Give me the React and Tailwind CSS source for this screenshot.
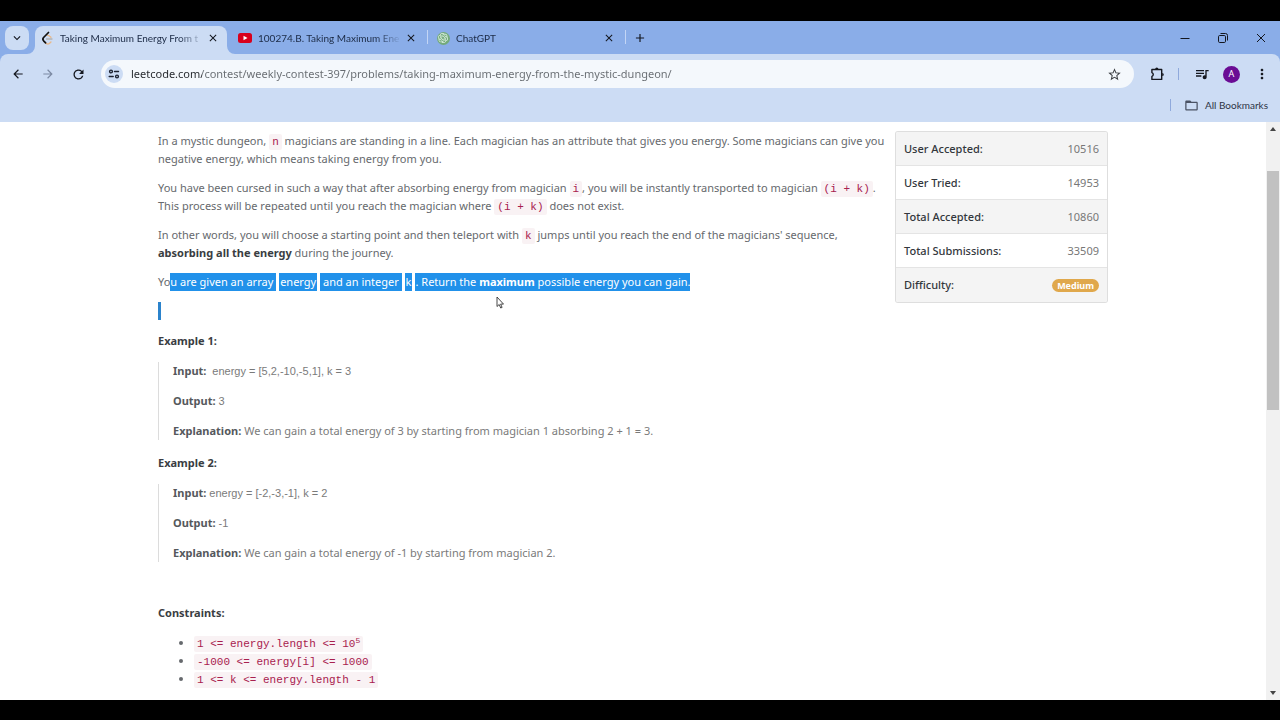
import { MdArrowBack, MdArrowForward, MdRefresh, MdStarBorder, MdQueueMusic, MdMoreVert, MdFolderOpen, MdClose, MdAdd, MdKeyboardArrowDown } from "react-icons/md";
import { SiOpenai } from "react-icons/si";

function LeetCodeIcon() {
  return (
    <svg viewBox="0 0 14 14" className="h-[14px] w-[14px]" fill="none" strokeLinecap="round">
      <path d="M6.500 8h5.500" stroke="#b3b3b3" strokeWidth="1.300" />
      <path d="M6 12.200c1 .9 2.600.9 3.600 0l1.300-1.200M7.500 4.400c.8-.1 1.600.2 2.200.8l1.200 1.100" stroke="#e9b98a" strokeWidth="1.400" />
      <path d="M8.500 1.500 3.600 6.500c-.9 1-.9 2.300 0 3.300l2 2.100" stroke="#111" strokeWidth="1.700" />
    </svg>
  );
}

function YouTubeIcon() {
  return (
    <svg viewBox="0 0 14 10" className="h-[10px] w-[14px]">
      <rect width="14" height="10" rx="2.500" fill="#d8001d" />
      <path d="M5.500 2.800v4.400L9.500 5z" fill="#fff" />
    </svg>
  );
}

function ChatIcon() {
  return (
    <span className="flex h-[13px] w-[13px] items-center justify-center rounded-full bg-[#74aa7c] text-[#e4f5e8]">
      <SiOpenai size={10} />
    </span>
  );
}

function TuneIcon() {
  return (
    <svg viewBox="0 0 12 12" className="h-3 w-3" fill="none" stroke="#1c2230" strokeWidth="1.400" strokeLinecap="round">
      <circle cx="3" cy="3.500" r="1.400" />
      <path d="M6.500 3.500h4M1.200 8.500h4" />
      <circle cx="9" cy="8.500" r="1.400" />
    </svg>
  );
}

function PuzzleIcon() {
  return (
    <svg viewBox="0 0 16 16" className="h-4 w-4" fill="#14171f">
      <path d="M2.900 3.500h9.800v9.900H2.900v-3a2 2 0 0 0 0-3.800z" fill="none" stroke="#14171f" strokeWidth="1.400" strokeLinejoin="round" />
      <path d="M6.200 3a1.600 1.600 0 0 1 3.200 0zM13.200 6.900a1.600 1.600 0 0 1 0 3.200z" />
    </svg>
  );
}

function Foot({ className }) {
  return (
    <svg viewBox="0 0 8 8" className={className} fill="#ccdcf4">
      <path d="M8 0v8H0a8 8 0 0 0 8-8z" />
    </svg>
  );
}

function Tab({ icon, title, active }) {
  return (
    <div className="relative flex w-[198px] shrink-0 items-end">
      <div
        className={
          active
            ? "relative mx-[3px] flex h-7 min-w-0 flex-1 items-center rounded-t-lg bg-[#ccdcf4] pr-2 pb-1 pl-1"
            : "relative mx-[3px] flex h-7 min-w-0 flex-1 items-center pr-2 pb-1 pl-1"
        }
      >
        {active && <Foot className="absolute bottom-0 -left-2 h-2 w-2" />}
        {active && <Foot className="absolute -right-2 bottom-0 h-2 w-2 -scale-x-100" />}
        <span className="flex w-4 shrink-0 justify-center">{icon}</span>
        <a
          href="#tab"
          className="ml-[5px] min-w-0 flex-1 overflow-hidden font-[Lato,sans-serif] text-[10px] whitespace-nowrap text-[#1b2a45] [mask-image:linear-gradient(to_right,#000_118px,transparent_144px)]"
        >
          {title}
        </a>
        <button aria-label="Close tab" className="ml-1 flex h-3 w-3 shrink-0 items-center justify-center text-[#14171f]">
          <MdClose size={12} />
        </button>
      </div>
      {!active && <span className="absolute right-0 bottom-[10px] h-[14px] w-px bg-[#c3d5f5]" />}
    </div>
  );
}

function Code({ children }) {
  return (
    <code className="rounded-xs bg-[#f9f2f4] px-[3px] py-[2px] font-['Liberation_Mono',monospace] text-[11px] leading-none text-[#a8204e]">
      {children}
    </code>
  );
}

function Sel({ children, code }) {
  return (
    <span
      className={
        code
          ? "mx-[3px] inline-block h-[18px] bg-[#2191ea] px-px align-top text-white"
          : "inline-block h-[18px] bg-[#2191ea] align-top whitespace-pre text-white"
      }
    >
      {children}
    </span>
  );
}

function Example({ title, input, output, explanation }) {
  return (
    <section className="mb-[14px]">
      <h2 className="mb-3 font-bold text-[#3a3d42]">{title}</h2>
      <blockquote className="space-y-3 border-l border-[#dcdcdc] pl-[14px] text-[#7a7a7a]">
        <p className="h-[18px]">
          <strong className="text-[#55585c]">Input:</strong> <span className="font-['Liberation_Sans',sans-serif]">{input}</span>
        </p>
        <p className="h-[18px]">
          <strong className="text-[#55585c]">Output:</strong> <span className="font-['Liberation_Sans',sans-serif]">{output}</span>
        </p>
        <p>
          <strong className="text-[#55585c]">Explanation:</strong> {explanation}
        </p>
      </blockquote>
    </section>
  );
}

const stats = [
  ["User Accepted:", "10516"],
  ["User Tried:", "14953"],
  ["Total Accepted:", "10860"],
  ["Total Submissions:", "33509"],
];

export default function App() {
  return (
    <div className="flex h-screen flex-col overflow-hidden bg-black pt-[21px] pb-5 font-['Noto_Sans','Open_Sans',sans-serif] text-[11px] leading-[18px]">
      <header className="shrink-0 bg-[#8aade8]">
        <div className="flex h-[33px]">
          <button aria-label="Search tabs" className="mt-[5px] ml-[5px] flex h-6 w-6 shrink-0 items-center justify-center rounded-lg bg-[#ccdcf4] text-[#14171f]">
            <MdKeyboardArrowDown size={14} />
          </button>
          <nav className="ml-[3px] flex">
            <Tab active icon={<LeetCodeIcon />} title="Taking Maximum Energy From t" />
            <Tab icon={<YouTubeIcon />} title="100274.B. Taking Maximum Ene" />
            <Tab icon={<ChatIcon />} title="ChatGPT" />
          </nav>
          <button aria-label="New tab" className="ml-[6px] flex w-4 items-center justify-center text-[#14171f]">
            <MdAdd size={14} />
          </button>
          <div className="mr-[13px] ml-auto flex items-center gap-[26px] text-[#14171f]">
            <button aria-label="Minimize" className="flex h-3 w-3 items-center">
              <svg viewBox="0 0 12 12" className="h-3 w-3" stroke="currentColor"><path d="M1.500 6.500h9" /></svg>
            </button>
            <button aria-label="Restore">
              <svg viewBox="0 0 12 12" className="h-3 w-3" fill="none" stroke="currentColor">
                <rect x="1.500" y="3.500" width="7" height="7" rx="1.200" />
                <path d="M3.500 1.500H8.500a2 2 0 0 1 2 2V8.500" />
              </svg>
            </button>
            <button aria-label="Close">
              <svg viewBox="0 0 12 12" className="h-3 w-3" stroke="currentColor"><path d="m2 2 8 8M10 2l-8 8" /></svg>
            </button>
          </div>
        </div>
        <div className="rounded-t-lg bg-[#ccdcf4]">
          <div className="flex items-center pt-[6px] pr-[10px] pl-[11px] text-[#14171f]">
            <div className="flex gap-4">
              <button aria-label="Back"><MdArrowBack size={14} /></button>
              <button aria-label="Forward" className="text-[#7c8aa3]"><MdArrowForward size={14} /></button>
              <button aria-label="Reload"><MdRefresh size={15} /></button>
            </div>
            <div className="ml-[15px] flex h-7 min-w-0 flex-1 items-center rounded-full bg-[#f4f8fc] pr-3 pl-1">
              <button aria-label="Site information" className="flex h-[18px] w-[18px] shrink-0 items-center justify-center rounded-full bg-[#ccdcf4]">
                <TuneIcon />
              </button>
              <input
                aria-label="Address"
                defaultValue="leetcode.com/contest/weekly-contest-397/problems/taking-maximum-energy-from-the-mystic-dungeon/"
                className="ml-2 min-w-0 flex-1 bg-[linear-gradient(to_right,#23262b_71px,#666b70_71px)] bg-clip-text text-transparent outline-none"
              />
              <button aria-label="Bookmark this tab" className="text-[#3a3d42]"><MdStarBorder size={15} /></button>
            </div>
            <button aria-label="Extensions" className="ml-[15px]"><PuzzleIcon /></button>
            <span className="ml-[13px] h-3 w-px bg-[#8fa9dc]" />
            <button aria-label="Media" className="ml-[15px]"><MdQueueMusic size={16} /></button>
            <button aria-label="Profile" className="ml-[13px] flex h-[17px] w-[17px] items-center justify-center rounded-full bg-[#6a0c94] text-[9px] text-white">A</button>
            <button aria-label="Menu" className="ml-[14px]"><MdMoreVert size={16} /></button>
          </div>
          <div className="flex h-[34px] items-center justify-end pr-3 font-[Lato,sans-serif] text-[10px] text-[#2c3445]">
            <span className="mr-[13px] h-3 w-px bg-[#8fa9dc]" />
            <button className="flex items-center gap-[6px]">
              <MdFolderOpen size={15} className="text-[#4a5263]" />
              All Bookmarks
            </button>
          </div>
        </div>
      </header>

      <div className="flex min-h-0 flex-1 bg-white">
        <div className="min-w-0 flex-1 overflow-hidden">
          <div className="mx-auto flex w-full max-w-[950px] items-start gap-[7px] pt-[9px]">
            <main className="min-w-0 flex-1 text-[#66696d]">
              <div className="mb-3 space-y-[11px] pt-px">
                <p>
                  In a mystic dungeon, <Code>n</Code> magicians are standing in a line. Each magician has an attribute that gives you energy. Some magicians can give you negative energy, which means taking energy from you.
                </p>
                <p>
                  You have been cursed in such a way that after absorbing energy from magician <Code>i</Code>, you will be instantly transported to magician <Code>(i + k)</Code>. This process will be repeated until you reach the magician where <Code>(i + k)</Code> does not exist.
                </p>
                <p>
                  In other words, you will choose a starting point and then teleport with <Code>k</Code> jumps until you reach the end of the magicians' sequence, <strong className="text-[#3a3d42]">absorbing all the energy</strong> during the journey.
                </p>
                <p className="relative">
                  Yo<Sel>u are given an array </Sel><Sel code>energy</Sel><Sel> and an integer </Sel><Sel code>k</Sel><Sel>. Return the <strong>maximum</strong> possible energy you can gain.</Sel>
                  <svg viewBox="0 0 8 13" className="absolute top-[23px] left-[338px] h-[13px] w-2" fill="#fff" stroke="#333" strokeWidth=".9">
                    <path d="M1 1v9.500l2.200-2 1.500 3.500 1.400-.6-1.500-3.300h2.900z" />
                  </svg>
                </p>
                <p><span className="block h-[18px] w-[3px] bg-[#2b83cc]" /></p>
              </div>

              <Example
                title="Example 1:"
                input={"\u00a0energy = [5,2,-10,-5,1], k = 3"}
                output="3"
                explanation="We can gain a total energy of 3 by starting from magician 1 absorbing 2 + 1 = 3."
              />
              <Example
                title="Example 2:"
                input="energy = [-2,-3,-1], k = 2"
                output="-1"
                explanation="We can gain a total energy of -1 by starting from magician 2."
              />

              <h2 className="mt-[42px] mb-3 font-bold text-[#3a3d42]">Constraints:</h2>
              <ul className="list-disc pl-9">
                <li><Code>1 &lt;= energy.length &lt;= 10<sup className="text-[8px]">5</sup></Code></li>
                <li><Code>-1000 &lt;= energy[i] &lt;= 1000</Code></li>
                <li><Code>1 &lt;= k &lt;= energy.length - 1</Code></li>
              </ul>
            </main>

            <aside className="mt-px mr-px w-[211px] shrink-0">
              <dl className="divide-y divide-[#e4e4e4] overflow-hidden rounded-xs ring-1 ring-[#dedede]">
                {stats.map(([label, value]) => (
                  <div key={label} className="flex h-[34px] items-center justify-between px-2 odd:bg-[#f4f4f4]">
                    <dt className="font-medium text-[#33373c]">{label}</dt>
                    <dd className="text-[#777]">{value}</dd>
                  </div>
                ))}
                <div className="flex items-center justify-between bg-[#f4f4f4] px-2 py-2">
                  <dt className="font-medium text-[#33373c]">Difficulty:</dt>
                  <dd className="rounded-full bg-[#e0a84c] px-[5px] text-[9px] leading-[13px] font-bold text-white">Medium</dd>
                </div>
              </dl>
            </aside>
          </div>
        </div>
        <div className="flex w-[14px] shrink-0 flex-col items-center bg-[#f1f1f1] py-[5px]">
          <svg viewBox="0 0 6 4" className="h-1 w-[6px]"><path d="M0 4l3-4 3 4z" fill="#444" /></svg>
          <div className="mt-10 h-[239px] w-3 bg-[#c1c1c1]" />
          <svg viewBox="0 0 6 4" className="mt-auto h-1 w-[6px]"><path d="M0 0l3 4 3-4z" fill="#444" /></svg>
        </div>
      </div>
    </div>
  );
}
